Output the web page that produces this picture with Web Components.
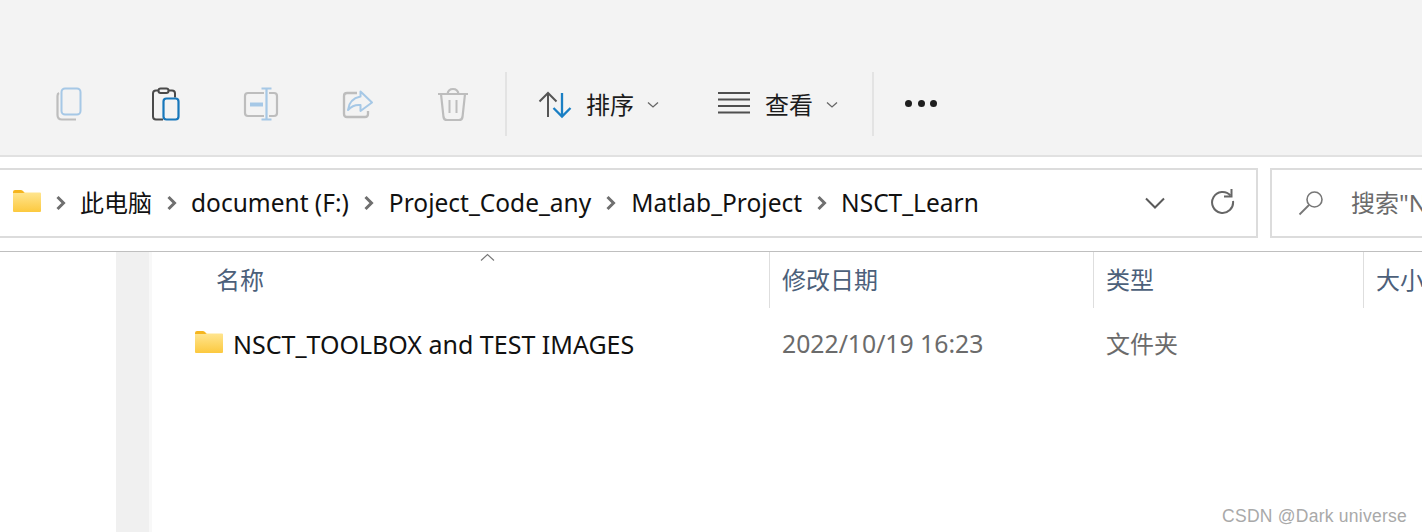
<!DOCTYPE html>
<html lang="zh"><head><meta charset="utf-8"><title>NSCT_Learn</title>
<style>
html,body{margin:0;padding:0;background:#fff;height:532px;overflow:hidden}
body{font-family:"Noto Sans","Noto Sans CJK SC",sans-serif}
</style></head><body>
<fx-window>
<fx-toolbar slot="toolbar"></fx-toolbar>
<fx-address slot="address"></fx-address>
<fx-list slot="list"></fx-list>
</fx-window>
<script>
const CJK='"Noto Sans","Noto Sans CJK SC",sans-serif';
const folder=(w,h,st='')=>`<svg style="${st}" width="${w}" height="${h}" viewBox="0 0 28 22"><defs><linearGradient id="g" x1="0" y1="0" x2="0" y2="1"><stop offset="0" stop-color="#ffe58f"/><stop offset="1" stop-color="#fcc93f"/></linearGradient></defs><path d="M0 2q0-2 2-2h6q1.500 0 2.500 1.500L12 3H0z" fill="#f5b51f"/><path d="M0 3h10l2-.5h15q1 0 1 1V21q0 1-1 1H1q-1 0-1-1z" fill="url(#g)"/></svg>`;
const crumb=(cls='')=>`<svg class="c ${cls}" width="11" height="16"><path d="M2.500 2l6 6-6 6" stroke="#6f6f6f" stroke-width="3"/></svg>`;
class Base extends HTMLElement{
  constructor(){super();this.attachShadow({mode:'open'}).innerHTML=this.constructor.html}
}
class FxWindow extends Base{static html=`<style>:host{display:flex;flex-direction:column;width:1422px;height:532px;position:relative;overflow:hidden;background:#fff;font-family:${CJK}}
.wm{position:absolute;right:15px;bottom:6px;font:17.500px/20px "Liberation Sans",sans-serif;letter-spacing:.25px;color:#a9a9a9}</style>
<slot name="toolbar"></slot><slot name="address"></slot><slot name="list"></slot><div class="wm">CSDN @Dark universe</div>`}
class FxToolbar extends Base{static html=`<style>
:host{display:flex;align-items:flex-start;height:155px;box-sizing:content-box;background:#f3f3f3;border-bottom:2px solid #e1e1e1;padding-left:21px;color:#1c1c1c}
.ib{width:96px;height:40px;margin-top:84px;display:flex;justify-content:center}
svg{display:block;fill:none}
.sep{width:2px;height:64px;margin-top:72px;background:#e3e3e3}
.cmd{display:flex;align-items:center;height:40px;margin-top:85px;font-size:24px;line-height:40px}
.cmd>svg:first-child{margin-top:-2px}
.chev{margin-left:13px}
.dots{display:flex;gap:5.500px;margin:100px 0 0 31px}
.dots i{width:7px;height:7px;border-radius:50%;background:#1e1e1e}
</style>
<div class="ib"><svg width="40" height="40"><path d="M10 9c-1 .5-1.500 1.500-1.500 3v19q0 4.500 4.500 4.500h14" stroke="#bdbdbd" stroke-width="2.200"/><rect x="12.500" y="4.500" width="19" height="26" rx="3.500" stroke="#a6c8e6" stroke-width="2"/></svg></div>
<div class="ib"><svg width="40" height="40"><path d="M18 35.500h-7q-3 0-3-3V9.500q0-3 3-3h3M24 6.500h3q3 0 3 3v4" stroke="#4a4a4a" stroke-width="2"/><rect x="13.500" y="4.500" width="10" height="4.500" rx="2.200" stroke="#4a4a4a" stroke-width="2"/><rect x="18.500" y="14.500" width="15" height="21" rx="3" stroke="#1777bb" stroke-width="2.200"/></svg></div>
<div class="ib"><svg width="40" height="40"><path d="M23 9H7q-3 0-3 3v17q0 3 3 3h16M28 9h5q3 0 3 3v17q0 3-3 3h-5" stroke="#bdbdbd" stroke-width="2.200"/><path d="M25.500 4v32M20.500 4.500h10M20.500 35.500h10" stroke="#a6c8e6" stroke-width="2.200"/><path d="M9 20.500h13" stroke="#a6c8e6" stroke-width="4"/></svg></div>
<div class="ib"><svg width="40" height="40"><path d="M20 9H10q-3 0-3 3v18q0 3 3 3h18q3 0 3-3v-3" stroke="#bdbdbd" stroke-width="2.300"/><path d="M23.500 7.500 35 18.500 23.500 27v-6c-5-.5-9 1-12.500 5 .8-8 5-12 12.500-13.500z" stroke="#a6c8e6" stroke-width="2" stroke-linejoin="round"/></svg></div>
<div class="ib"><svg width="40" height="40" stroke="#bdbdbd"><path d="M5 10h30M14.500 10c.5-3 2.500-5 5.500-5s5 2 5.500 5" stroke-width="2.200"/><path d="M8 10l2.500 23q.4 3 3.500 3h12q3.100 0 3.500-3L32 10" stroke-width="2.200"/><path d="M16.500 16v13M23.500 16v13" stroke-width="2"/></svg></div>
<div class="sep" style="margin-left:4px"></div>
<div class="cmd" style="margin-left:31px"><svg width="36" height="40"><path d="M10 33V9M1.500 17.500 10 9l8.500 8.500" stroke="#555" stroke-width="2"/><path d="M24 9v23.500M15.500 24l8.500 8.500 8.500-8.500" stroke="#1a7fc4" stroke-width="2.300"/></svg><span style="margin-left:12px">排序</span><svg class="chev" width="12" height="8"><path d="M1 1.500 6 6l5-4.500" stroke="#666" stroke-width="1.300"/></svg></div>
<div class="cmd" style="margin-left:59px"><svg width="32" height="40"><path d="M0 9h32M0 15.500h32M0 22h32M0 28.500h32" stroke="#4f4f4f" stroke-width="2"/></svg><span style="margin-left:15px">查看</span><svg class="chev" width="12" height="8"><path d="M1 1.500 6 6l5-4.500" stroke="#666" stroke-width="1.300"/></svg></div>
<div class="sep" style="margin-left:34px"></div>
<div class="dots"><i></i><i></i><i></i></div>`}
class FxAddress extends Base{static html=`<style>
:host{display:flex;gap:12px;height:70px;padding:11px 0 13px;margin-left:-2px;border-bottom:1px solid #bfbfbf;background:#fff;font-size:24px}
.bar,.search{box-sizing:border-box;flex:none;height:70px;border:2px solid #dcdcdc;background:#fff;display:flex;align-items:center}
.bar{width:1260px;padding-left:13px;color:#111}
.c{margin:0 14px;display:block}
.c.w{margin-right:15px}
span{white-space:nowrap;line-height:66px}
.l{font-size:24.500px}
.end{margin-left:auto;display:flex;align-items:center}
.search{width:170px;padding-left:26px;color:#6b6b6b}
svg{display:block;fill:none}
</style>
<div class="bar">${folder(28,22,'margin-top:-4px')}
${crumb()}<span>此电脑</span>
${crumb()}<span class="l">document (F:)</span>
${crumb('w')}<span class="l">Project_Code_any</span>
${crumb('w')}<span class="l">Matlab_Project</span>
${crumb()}<span class="l">NSCT_Learn</span>
<div class="end"><svg width="22" height="14"><path d="M2 2.500l9 9 9-9" stroke="#5a5a5a" stroke-width="2"/></svg>
<svg style="margin:-4px 21px 0 43px" width="26" height="26"><path d="M21.500 7.500A10.500 10.500 0 1 0 24 13" stroke="#666" stroke-width="2"/><path d="M22.500 1v7.500H15" stroke="#666" stroke-width="2"/></svg></div></div>
<div class="search"><svg width="26" height="26" style="margin-right:27px"><circle cx="16.500" cy="9.500" r="7.500" stroke="#777" stroke-width="1.600"/><path d="M11 15 1.500 24.500" stroke="#777" stroke-width="1.800"/></svg><span>搜索"N</span></div>`}
class FxList extends Base{static html=`<style>
:host{display:flex;flex:1;min-height:0;position:relative;background:#fff}
.side{width:116px}
.strip{width:33px;background:#f0f0f0}
.edge{width:3px;background:#f8f8f8}
.main{flex:1;min-width:0;display:flex;flex-direction:column;overflow:hidden}
.head{display:grid;grid-template-columns:617px 324px 270px 100px;height:52px}
.head div{box-sizing:border-box;color:#4c607a;font-size:24px;line-height:56px;padding-left:12px;border-left:1px solid #dedede;white-space:nowrap}
.head div:first-child{border-left:0;padding-left:64px}
.row{display:grid;grid-template-columns:617px 324px 270px;height:36px;margin-top:22px;font-size:24px;line-height:36px;white-space:nowrap}
.n{display:flex;align-items:center;padding-left:43px;color:#111;font-size:25px}
.n svg{margin:-4px 10px 0 0;display:block}
.d{padding-left:13px;color:#6b6b6b}
.dt{font-size:24.750px}
.caret{position:absolute;left:480px;top:1px;display:block;fill:none}
</style>
<div class="side"></div><div class="strip"></div><div class="edge"></div>
<div class="main"><div class="head"><div>名称</div><div>修改日期</div><div>类型</div><div>大小</div></div>
<div class="row"><div class="n">${folder(28,22)}<span>NSCT_TOOLBOX and TEST IMAGES</span></div><div class="d dt">2022/10/19 16:23</div><div class="d">文件夹</div></div></div>
<svg class="caret" width="15" height="9"><path d="M1 7.500 7.500 1.500 14 7.500" stroke="#777" stroke-width="1.100"/></svg>`}
customElements.define('fx-window',FxWindow);
customElements.define('fx-toolbar',FxToolbar);
customElements.define('fx-address',FxAddress);
customElements.define('fx-list',FxList);
</script></body></html>
